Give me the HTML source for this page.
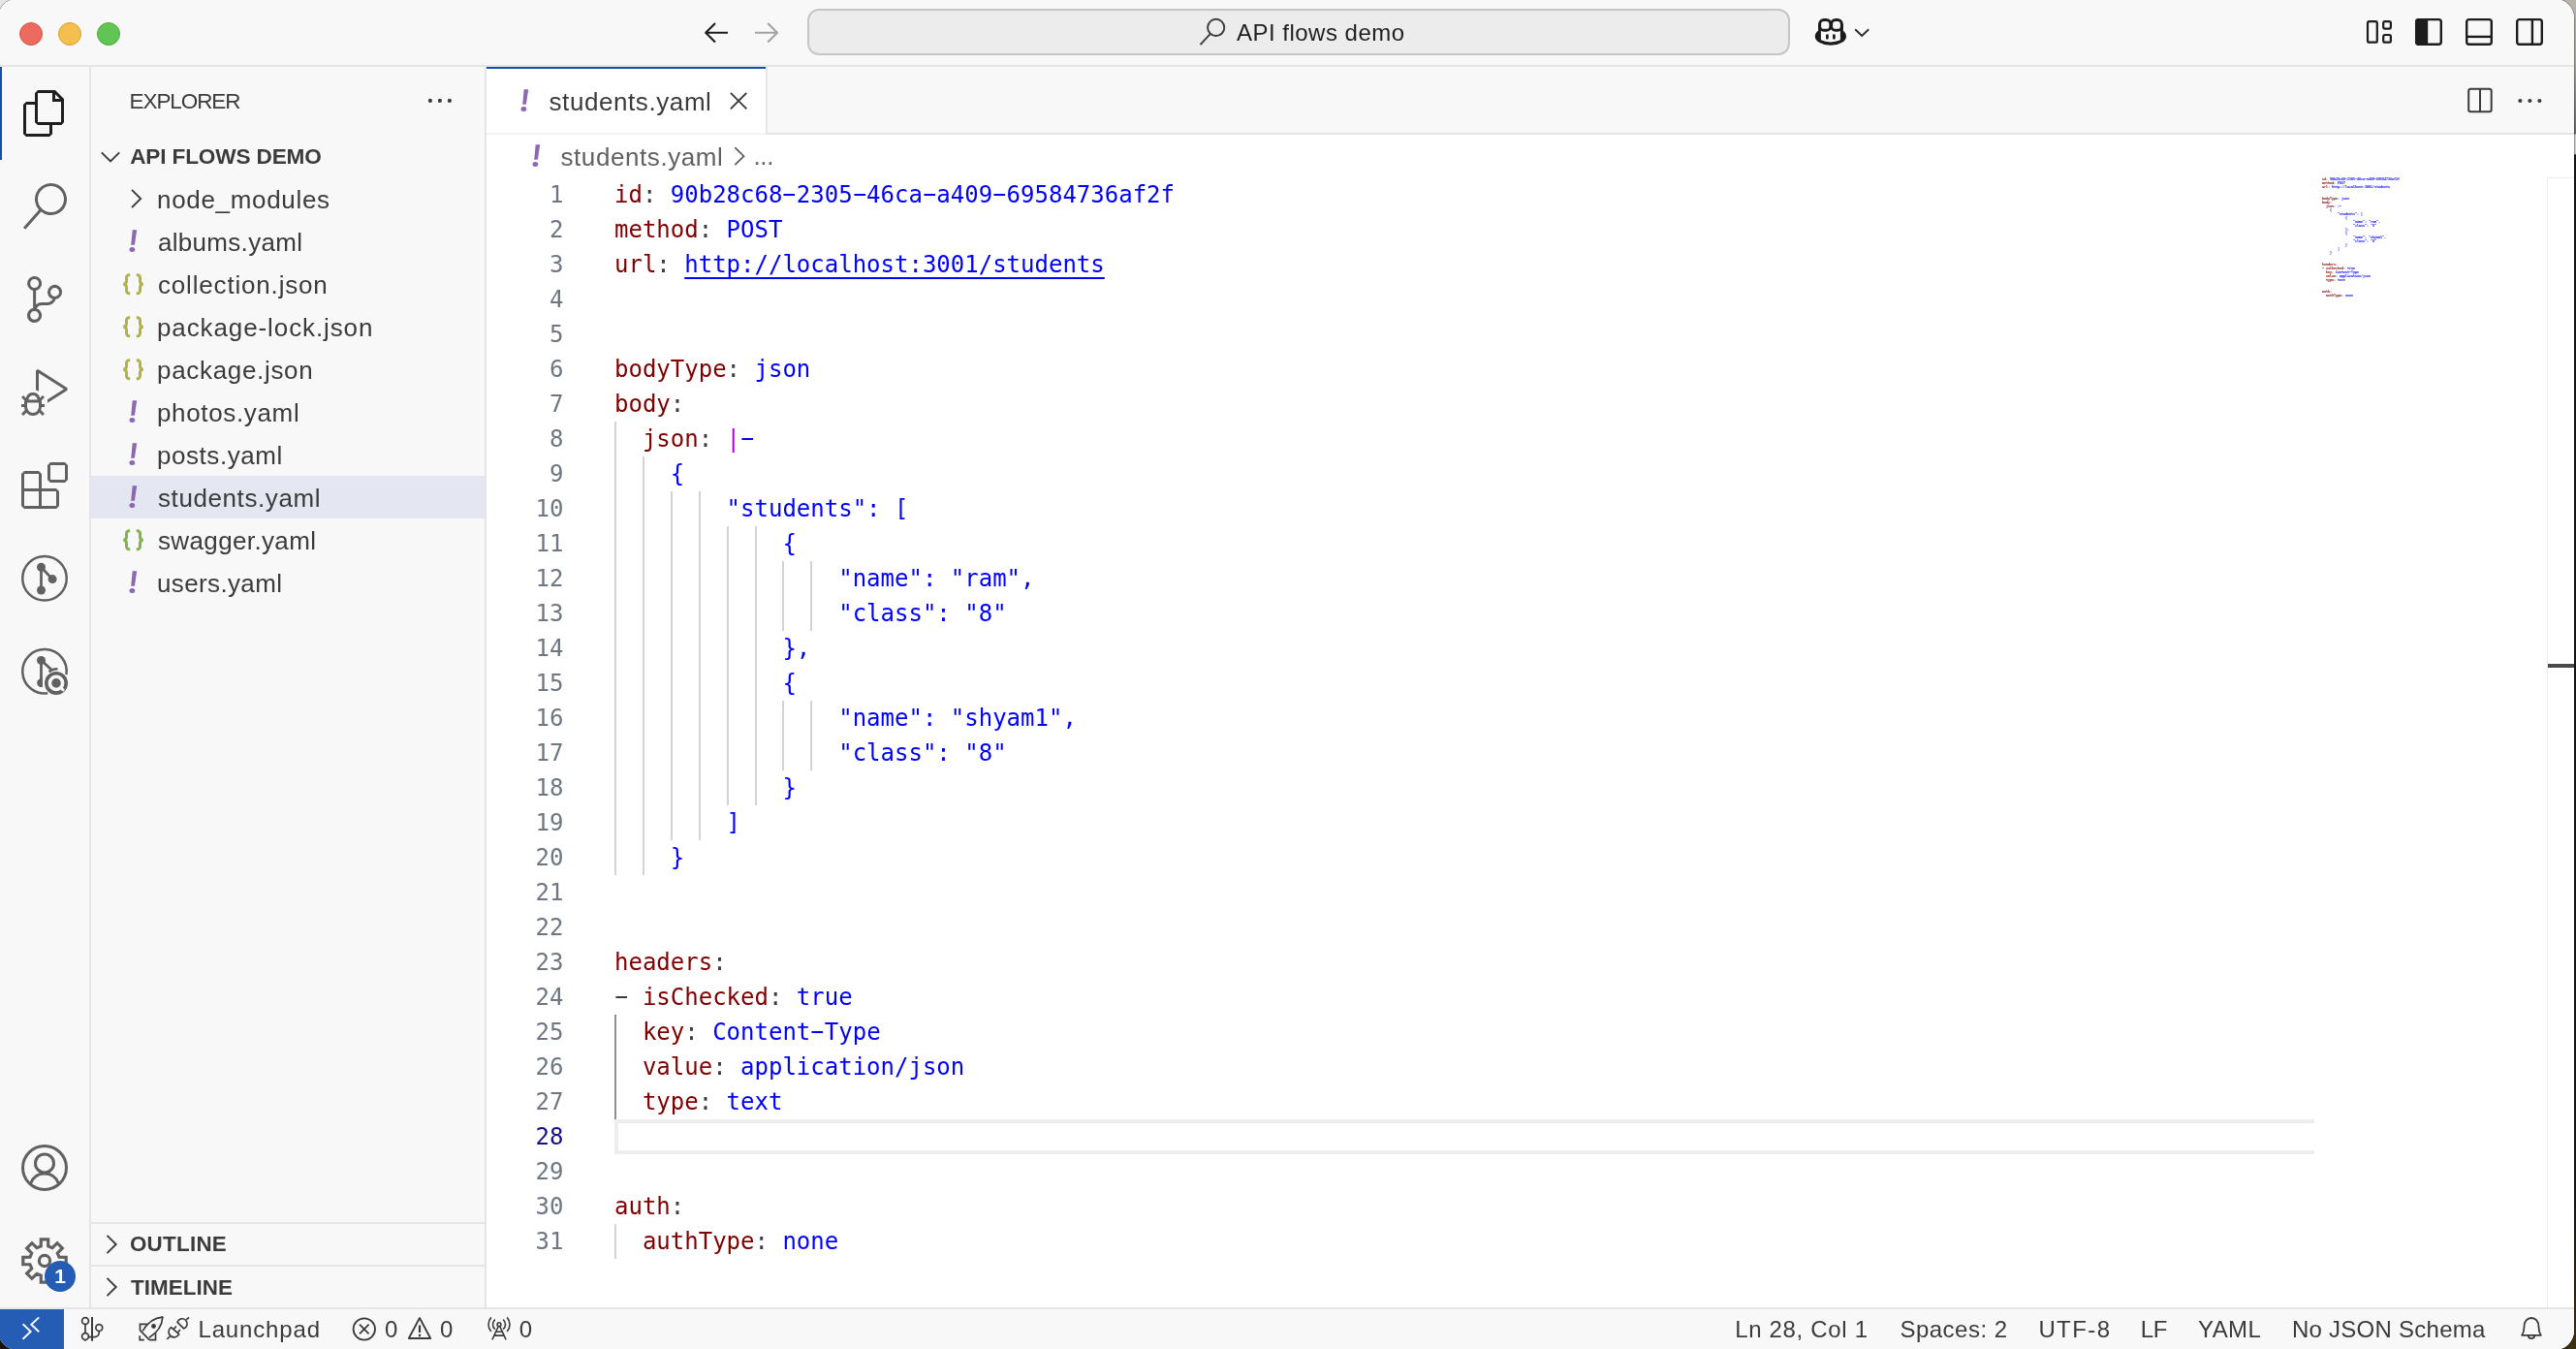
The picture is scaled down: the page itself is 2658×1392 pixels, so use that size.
<!DOCTYPE html>
<html lang="en">
<head>
<meta charset="utf-8">
<title>students.yaml — API flows demo</title>
<style>
*{box-sizing:border-box;margin:0;padding:0}
html,body{width:2658px;height:1392px;background:#16151b}
body{font-family:"Liberation Sans",sans-serif}
#root{position:relative;width:2658px;height:1392px;overflow:hidden;background:#16151b}
#bgtop{position:absolute;left:2600px;top:0;width:58px;height:160px;background:linear-gradient(#bab4ac 0,#aaa39b 40%,#6a6562 86%,#d0d0d0 87%,#d0d0d0 99%,#16161e 100%)}#bgbot{position:absolute;left:2600px;top:1240px;width:58px;height:152px;background:linear-gradient(#16161e,#2a220f 40%,#3b3013)}
#bgtl{position:absolute;left:0;top:0;width:30px;height:30px;background:#e6e6e6}#bgbl{position:absolute;left:0;top:1360px;width:30px;height:32px;background:#1e1208}
#win{position:absolute;left:-2px;top:-1px;width:2658px;height:1394px;background:#f8f8f8;border-radius:20px;overflow:hidden;box-shadow:0 0 0 1px rgba(0,0,0,.28)}
#win>div,#win>svg,#win>span,#win>i{position:absolute}
/* everything inside #win is laid out in screenshot coords via this wrapper */
#w{position:absolute;left:2px;top:1px;width:2656px;height:1392px;will-change:transform}
#w>*{position:absolute}
.t{position:absolute;white-space:pre;display:block}
.hl{background:#e5e5e5}
#titlebar{left:0;top:0;width:2656px;height:67px;background:#f8f8f8}
#cc{left:833px;top:9px;width:1014px;height:48px;border:2px solid #c6c6c6;border-radius:12px;background:#ececec}
.tl{width:24px;height:24px;border-radius:50%;top:23px}
#editor{left:502px;top:139px;width:2154px;height:1210px;background:#fff}
#tabbar{left:502px;top:69px;width:2154px;height:68px;background:#f8f8f8}
#tab{left:502px;top:69px;width:288px;height:70px;background:#fff;border-top:2px solid #1550a8}
#sel{left:94px;top:491px;width:406px;height:44px;background:#e4e6f1}
#status{left:0;top:1351px;width:2656px;height:41px;background:#f8f8f8}
#remote{left:0;top:1351px;width:66px;height:41px;background:#255db4}
/* code */
.ln{position:absolute;left:502px;width:79.5px;text-align:right;font:24px/36px "DejaVu Sans Mono","Liberation Mono",monospace;color:#6e7681;height:36px}
.ln.act{color:#171184}
.cl{position:absolute;left:634px;font:24px/36px "DejaVu Sans Mono","Liberation Mono",monospace;white-space:pre;height:36px;color:#3b3b3b}
.k{color:#800000}.v{color:#0000ff}.p{color:#3b3b3b}.m{color:#af00db}.h{display:inline-block;transform:translateY(-1px) scaleX(1.9)}
.u{color:#0000ff;text-decoration:underline;text-decoration-thickness:2px;text-underline-offset:5px}
.g{position:absolute;width:2px;height:36px;background:#d3d3d3}
.g.ga{background:#8e8e8e}
#curline{left:634px;top:1155px;width:1754px;height:36px;border:4px solid #eeeeee;border-right:none}
#mini{left:2395.5px;top:183px;width:0;height:0}
#mini .mi{position:absolute;left:0;top:0;transform-origin:0 0;transform:scale(0.1384,0.1384);width:1800px}
.ml{position:absolute;left:0;font:24px/29px "DejaVu Sans Mono","Liberation Mono",monospace;white-space:pre;height:29px;font-weight:bold}
#mini .u{text-decoration:none}
</style>
</head>
<body>
<div id="root">
<div id="bgtop"></div>
<div id="bgbot"></div>
<div id="bgtl"></div>
<div id="bgbl"></div>
<div id="win"><div id="w">

<!-- ===== title bar ===== -->
<div id="titlebar"></div>
<div class="hl" style="left:0;top:67px;width:2656px;height:2px"></div>
<div class="tl" style="left:20px;background:#ed6a5e;border:1px solid #d5574b"></div>
<div class="tl" style="left:60px;background:#f5bf4f;border:1px solid #d9a13a"></div>
<div class="tl" style="left:100px;background:#61c554;border:1px solid #4ea73f"></div>
<svg style="left:722px;top:18px" width="32" height="32" viewBox="0 0 32 32" fill="none" stroke="#1c1c1c" stroke-width="2.100" stroke-linecap="butt" stroke-linejoin="round"><path d="M29 15.800H6.500M16 6L6.200 15.800l9.800 9.800"/></svg>
<svg style="left:776px;top:18px" width="32" height="32" viewBox="0 0 32 32" fill="none" stroke="#a3a3a3" stroke-width="2.100" stroke-linejoin="round"><path d="M3 15.800h22.500M16.200 6l9.800 9.800-9.800 9.800"/></svg>
<div id="cc"></div>
<svg style="left:1237px;top:17px" width="30" height="32" viewBox="0 0 30 32" fill="none" stroke="#3b3b3b" stroke-width="1.900"><circle cx="17.700" cy="11.400" r="8.600"/><path d="M11.900 17.800L1.500 29.200"/></svg>
<!-- copilot -->
<svg style="left:1868px;top:14px" width="42" height="36" viewBox="0 0 42 36"><ellipse cx="20.900" cy="23.400" rx="16.100" ry="9.400" fill="#1c1c1c"/><rect x="8.100" y="11" width="25.800" height="15" fill="#1c1c1c"/><path d="M10.900 15.500H30.900V27.300A14 7 0 0 1 10.900 27.300Z" fill="#f8f8f8"/><g fill="#f8f8f8" stroke="#1c1c1c" stroke-width="3"><rect x="9.600" y="6.400" width="11.300" height="10.900" rx="4.400"/><rect x="21.600" y="6.400" width="10.800" height="10.900" rx="4.400"/></g><path d="M17.400 22.700v2.600M24.400 22.700v2.600" stroke="#1c1c1c" stroke-width="2.800" stroke-linecap="round"/></svg>
<svg style="left:1912px;top:26px" width="18" height="14" viewBox="0 0 18 14" fill="none" stroke="#2b2b2b" stroke-width="1.900"><path d="M2.200 4.300l7 6.700 7-6.700"/></svg>
<!-- layout icons -->
<svg style="left:2441px;top:20px" width="30" height="28" viewBox="0 0 30 28" fill="none" stroke="#1c1c1c" stroke-width="2.200"><rect x="2" y="2.100" width="9.800" height="21.600" rx="1.800"/><rect x="18.200" y="2.100" width="7.700" height="7.500" rx="1.800"/><rect x="18.200" y="16" width="7.700" height="7.700" rx="1.800"/></svg>
<svg style="left:2491px;top:18px" width="30" height="32" viewBox="0 0 30 32" fill="none" stroke="#1c1c1c" stroke-width="2.400"><rect x="2.200" y="2.100" width="25.600" height="25.600" rx="2.400"/><path d="M2.200 4.500a2.400 2.400 0 0 1 2.400-2.400h8.400v25.600h-8.400a2.400 2.400 0 0 1-2.400-2.400z" fill="#1c1c1c"/></svg>
<svg style="left:2543px;top:18px" width="30" height="32" viewBox="0 0 30 32" fill="none" stroke="#1c1c1c" stroke-width="2.400"><rect x="2.200" y="2.100" width="25.600" height="25.600" rx="2.400"/><path d="M2.200 19.900h25.600"/></svg>
<svg style="left:2595px;top:18px" width="30" height="32" viewBox="0 0 30 32" fill="none" stroke="#1c1c1c" stroke-width="2.400"><rect x="2.200" y="2.100" width="25.600" height="25.600" rx="2.400"/><path d="M17.900 2.100v25.600"/></svg>

<!-- ===== activity bar ===== -->
<div class="hl" style="left:92px;top:69px;width:2px;height:1280px"></div>
<div style="left:0;top:69px;width:2px;height:96px;background:#1550a8"></div>
<svg style="left:22px;top:93px" width="48" height="48" viewBox="0 0 24 24" fill="#1f1f1f"><path d="M17.500 0h-9L7 1.500V6H2.500L1 7.500v15.070L2.500 24h12.070L16 22.570V18h4.700l1.300-1.430V4.500L17.500 0zm0 2.120l2.380 2.380H17.500V2.120zm-3 20.380h-12v-15H7v9.070L8.500 18h6v4.500zm6-6h-12v-15H16V6h4.500v10.500z"/></svg>
<svg style="left:22px;top:189px" width="48" height="48" viewBox="0 0 24 24" fill="#616161"><path d="M15.250 0a8.250 8.250 0 0 0-6.180 13.720L1 22.880l1.120 1 8.050-9.120A8.251 8.251 0 1 0 15.250.010V0zm0 15a6.750 6.750 0 1 1 0-13.500 6.750 6.750 0 0 1 0 13.500z"/></svg>
<svg style="left:22px;top:285px" width="48" height="48" viewBox="0 0 24 24" fill="#616161"><path d="M21.007 8.222A3.738 3.738 0 0 0 15.045 5.200a3.737 3.737 0 0 0 1.156 6.583 2.988 2.988 0 0 1-2.668 1.670h-2.990a4.456 4.456 0 0 0-2.989 1.165V7.400a3.737 3.737 0 1 0-1.494 0v9.117a3.776 3.776 0 1 0 1.816.099 2.990 2.990 0 0 1 2.668-1.667h2.990a4.484 4.484 0 0 0 4.223-3.039 3.736 3.736 0 0 0 3.250-3.687zM4.565 3.738a2.242 2.242 0 1 1 4.484 0 2.242 2.242 0 0 1-4.484 0zm4.484 16.441a2.242 2.242 0 1 1-4.484 0 2.242 2.242 0 0 1 4.484 0zm8.221-9.715a2.242 2.242 0 1 1 0-4.485 2.242 2.242 0 0 1 0 4.485z"/></svg>
<svg style="left:22px;top:381px" width="48" height="48" viewBox="0 0 24 24" fill="#616161"><path d="M10.940 13.500l-1.320 1.320a3.730 3.730 0 0 0-7.240 0L1.060 13.500 0 14.560l1.720 1.720-.22.220V18H0v1.500h1.500v.080c.077.489.214.966.410 1.420L0 22.940 1.060 24l1.650-1.650A4.308 4.308 0 0 0 6 24a4.310 4.310 0 0 0 3.290-1.650L10.940 24 12 22.940 10.090 21c.198-.464.336-.951.410-1.450v-.1H12V18h-1.500v-1.500l-.22-.220L12 14.560l-1.060-1.060zM6 13.500a2.250 2.250 0 0 1 2.250 2.250h-4.500A2.250 2.250 0 0 1 6 13.500zm3 6a3.330 3.330 0 0 1-3 3 3.330 3.330 0 0 1-3-3v-2.250h6v2.250zm14.760-9.900v1.260L13.500 17.370V15.600l8.500-5.370L9 2v9.460a5.070 5.070 0 0 0-1.500-.72V.630L8.640 0l15.120 9.600z"/></svg>
<svg style="left:22px;top:477px" width="48" height="48" viewBox="0 0 24 24" fill="#616161"><path fill-rule="evenodd" clip-rule="evenodd" d="M13.500 1.500L15 0h7.500L24 1.500V9l-1.500 1.500H15L13.500 9V1.500zm1.500 0V9h7.500V1.500H15zM0 15V6l1.500-1.500H9L10.500 6v7.500H18l1.500 1.500v7.500L18 24H1.500L0 22.500V15zm9-1.500V6H1.500v7.500H9zM9 15H1.500v7.500H9V15zm1.500 7.500H18V15h-7.500v7.500z"/></svg>
<!-- gitlens -->
<svg style="left:20px;top:571px" width="52" height="52" viewBox="0 0 52 52" fill="none" stroke="#616161" stroke-width="2.500"><circle cx="26" cy="25.800" r="22.750"/><path d="M22.500 14.200v23.800M22.500 14.200l11.600 12.400" stroke-width="2.800"/><g fill="#616161" stroke="none"><circle cx="22.500" cy="14.200" r="4.500"/><circle cx="34.100" cy="26.600" r="4.500"/><circle cx="22.500" cy="38" r="4.500"/></g></svg>
<svg style="left:20px;top:667px" width="52" height="52" viewBox="0 0 52 52" fill="none" stroke="#616161" stroke-width="2.500"><path d="M29.240 48.320A22.750 22.750 0 1 1 48.500 29.160"/><path d="M22.500 14.200v23.800M22.500 14.200l10.500 9.800" stroke-width="2.800"/><path d="M30.500 26.300c2.600-2.300 5.600-3.200 9-3" stroke-width="2.600"/><g fill="#616161" stroke="none"><circle cx="22.500" cy="14.400" r="4.500"/><path d="M24 33.300a4.500 4.500 0 1 0 0 8.600z"/><circle cx="38" cy="37.900" r="12"/></g><circle cx="38" cy="37.900" r="6.600" stroke="#f8f8f8" stroke-width="3.600"/><path d="M43.400 43.300l1.700 1.500" stroke="#f8f8f8" stroke-width="3" stroke-linecap="round"/></svg>
<!-- account -->
<svg style="left:20px;top:1179px" width="52" height="52" viewBox="0 0 52 52" fill="none" stroke="#616161" stroke-width="3"><circle cx="26" cy="26" r="22.500"/><circle cx="26" cy="21.400" r="9.500"/><path d="M11.500 42.500c2.500-7 8-10.500 14.500-10.500s12 3.500 14.500 10.500"/></svg>
<!-- gear -->
<svg style="left:22px;top:1277px" width="48" height="48" viewBox="0 0 48 48" fill="none" stroke="#616161" stroke-width="3.200" stroke-linejoin="miter"><path d="M20.26 8.96 L20.31 1.81 L27.69 1.81 L27.74 8.96 L31.99 10.72 L37.08 5.69 L42.31 10.92 L37.28 16.01 L39.04 20.26 L46.19 20.31 L46.19 27.69 L39.04 27.74 L37.28 31.99 L42.31 37.08 L37.08 42.31 L31.99 37.28 L27.74 39.04 L27.69 46.19 L20.31 46.19 L20.26 39.04 L16.01 37.28 L10.92 42.31 L5.69 37.08 L10.72 31.99 L8.96 27.74 L1.81 27.69 L1.81 20.31 L8.96 20.26 L10.72 16.01 L5.69 10.92 L10.92 5.69 L16.01 10.72Z"/><circle cx="24" cy="24" r="5.600"/></svg>
<div style="left:46px;top:1301px;width:32px;height:32px;border-radius:50%;background:#255db4"></div>
<span class="t" style="left:46px;top:1301px;width:32px;text-align:center;font:bold 21px/32px 'Liberation Sans',sans-serif;color:#fff">1</span>

<!-- ===== sidebar ===== -->
<div class="hl" style="left:500px;top:69px;width:2px;height:1280px"></div>
<div id="sel"></div>
<svg style="left:440px;top:100px" width="28" height="8" viewBox="0 0 28 8" fill="#3b3b3b"><circle cx="3.900" cy="3.900" r="2.100"/><circle cx="13.900" cy="3.900" r="2.100"/><circle cx="23.900" cy="3.900" r="2.100"/></svg>
<svg style="left:102px;top:154px" width="24" height="16" viewBox="0 0 24 16" fill="none" stroke="#3b3b3b" stroke-width="1.900"><path d="M2.800 3.300l9.200 9.200 9.200-9.200"/></svg>
<svg style="left:132px;top:194px" width="16" height="22" viewBox="0 0 16 22" fill="none" stroke="#3b3b3b" stroke-width="1.900"><path d="M4 1.800l9.200 9.200L4 20.200"/></svg>
<div class="hl" style="left:94px;top:1261px;width:406px;height:2px"></div>
<div class="hl" style="left:94px;top:1305px;width:406px;height:2px"></div>
<svg style="left:107px;top:1273px" width="16" height="22" viewBox="0 0 16 22" fill="none" stroke="#3b3b3b" stroke-width="1.900"><path d="M3.500 1.800l9.200 9.200-9.200 9.200"/></svg>
<svg style="left:107px;top:1317px" width="16" height="22" viewBox="0 0 16 22" fill="none" stroke="#3b3b3b" stroke-width="1.900"><path d="M3.500 1.800l9.200 9.200-9.200 9.200"/></svg>
<!-- file icons -->
<svg style="left:122px;top:278.5px" width="32" height="30" viewBox="0 0 32 30" fill="none" stroke="#b1b343" stroke-width="3"><path d="M12.200 4.800h-1a2.700 2.700 0 0 0-2.700 2.700v3.500Q8.500 14.300 5.200 14.300Q8.500 14.300 8.500 17.600v3.500a2.700 2.700 0 0 0 2.700 2.700h1M18.800 4.800h1a2.700 2.700 0 0 1 2.700 2.700v3.500Q22.500 14.300 25.800 14.300Q22.500 14.300 22.500 17.600v3.500a2.700 2.700 0 0 1-2.700 2.700h-1"/></svg>
<svg style="left:122px;top:322.5px" width="32" height="30" viewBox="0 0 32 30" fill="none" stroke="#b1b343" stroke-width="3"><path d="M12.200 4.800h-1a2.700 2.700 0 0 0-2.700 2.700v3.500Q8.500 14.300 5.200 14.300Q8.500 14.300 8.500 17.600v3.500a2.700 2.700 0 0 0 2.700 2.700h1M18.800 4.800h1a2.700 2.700 0 0 1 2.700 2.700v3.500Q22.500 14.300 25.800 14.300Q22.500 14.300 22.500 17.600v3.500a2.700 2.700 0 0 1-2.700 2.700h-1"/></svg>
<svg style="left:122px;top:366.5px" width="32" height="30" viewBox="0 0 32 30" fill="none" stroke="#b1b343" stroke-width="3"><path d="M12.200 4.800h-1a2.700 2.700 0 0 0-2.700 2.700v3.500Q8.500 14.300 5.200 14.300Q8.500 14.300 8.500 17.600v3.500a2.700 2.700 0 0 0 2.700 2.700h1M18.800 4.800h1a2.700 2.700 0 0 1 2.700 2.700v3.500Q22.500 14.300 25.800 14.300Q22.500 14.300 22.500 17.600v3.500a2.700 2.700 0 0 1-2.700 2.700h-1"/></svg>
<svg style="left:122px;top:542.5px" width="32" height="30" viewBox="0 0 32 30" fill="none" stroke="#82b446" stroke-width="3"><path d="M12.200 4.800h-1a2.700 2.700 0 0 0-2.700 2.700v3.500Q8.500 14.300 5.200 14.300Q8.500 14.300 8.500 17.600v3.500a2.700 2.700 0 0 0 2.700 2.700h1M18.800 4.800h1a2.700 2.700 0 0 1 2.700 2.700v3.500Q22.500 14.300 25.800 14.300Q22.500 14.300 22.500 17.600v3.500a2.700 2.700 0 0 1-2.700 2.700h-1"/></svg>
<svg style="left:127px;top:233px" width="20" height="30" viewBox="0 0 20 30" fill="#8b68b0"><path d="M9.700 4.200h4.500L11.900 19.700H8.200z"/><ellipse cx="9.350" cy="24.600" rx="2.900" ry="2.500"/></svg>
<svg style="left:127px;top:409px" width="20" height="30" viewBox="0 0 20 30" fill="#8b68b0"><path d="M9.700 4.200h4.500L11.900 19.700H8.200z"/><ellipse cx="9.350" cy="24.600" rx="2.900" ry="2.500"/></svg>
<svg style="left:127px;top:453px" width="20" height="30" viewBox="0 0 20 30" fill="#8b68b0"><path d="M9.700 4.200h4.500L11.900 19.700H8.200z"/><ellipse cx="9.350" cy="24.600" rx="2.900" ry="2.500"/></svg>
<svg style="left:127px;top:497px" width="20" height="30" viewBox="0 0 20 30" fill="#8b68b0"><path d="M9.700 4.200h4.500L11.900 19.700H8.200z"/><ellipse cx="9.350" cy="24.600" rx="2.900" ry="2.500"/></svg>
<svg style="left:127px;top:585px" width="20" height="30" viewBox="0 0 20 30" fill="#8b68b0"><path d="M9.700 4.200h4.500L11.900 19.700H8.200z"/><ellipse cx="9.350" cy="24.600" rx="2.900" ry="2.500"/></svg>

<!-- ===== editor ===== -->
<div id="tabbar"></div>
<div class="hl" style="left:502px;top:137px;width:2154px;height:2px"></div>
<div id="tab"></div>
<div style="left:502px;top:137px;width:288px;height:2px;background:#f3f3f3"></div>
<div class="hl" style="left:790px;top:69px;width:2px;height:68px"></div>
<svg style="left:750px;top:92px" width="24" height="24" viewBox="0 0 24 24" fill="none" stroke="#3b3b3b" stroke-width="1.900"><path d="M3.900 3.900l16.400 16.400M20.300 3.900l-16.400 16.400"/></svg>
<svg style="left:2544px;top:88.500px" width="30" height="30" viewBox="0 0 30 30" fill="none" stroke="#3b3b3b" stroke-width="2"><rect x="3.200" y="2.800" width="23.500" height="23.400" rx="2.200"/><path d="M15 2.800v23.400"/></svg>
<svg style="left:2596.500px;top:100px" width="28" height="8" viewBox="0 0 28 8" fill="#3b3b3b"><circle cx="3.400" cy="4" r="2.100"/><circle cx="13.400" cy="4" r="2.100"/><circle cx="23.400" cy="4" r="2.100"/></svg>
<div id="editor"></div>
<svg style="left:754px;top:150px" width="16" height="22" viewBox="0 0 16 22" fill="none" stroke="#616161" stroke-width="1.800"><path d="M4.300 2.200L13.500 11.200L4.300 20.200"/></svg>
<svg style="left:530.7px;top:87.9px" width="20" height="30" viewBox="0 0 20 30" fill="#8b68b0"><path d="M9.700 4.200h4.500L11.900 19.700H8.200z"/><ellipse cx="9.350" cy="24.600" rx="2.900" ry="2.500"/></svg>
<svg style="left:542.8px;top:144.9px" width="20" height="30" viewBox="0 0 20 30" fill="#8b68b0"><path d="M9.700 4.200h4.500L11.900 19.700H8.200z"/><ellipse cx="9.350" cy="24.600" rx="2.900" ry="2.500"/></svg>
<div id="curline"></div>
<i class="g" style="left:634.0px;top:435px"></i>
<i class="g" style="left:634.0px;top:471px"></i>
<i class="g" style="left:662.9px;top:471px"></i>
<i class="g" style="left:634.0px;top:507px"></i>
<i class="g" style="left:662.9px;top:507px"></i>
<i class="g" style="left:691.8px;top:507px"></i>
<i class="g" style="left:720.7px;top:507px"></i>
<i class="g" style="left:634.0px;top:543px"></i>
<i class="g" style="left:662.9px;top:543px"></i>
<i class="g" style="left:691.8px;top:543px"></i>
<i class="g" style="left:720.7px;top:543px"></i>
<i class="g" style="left:749.6px;top:543px"></i>
<i class="g" style="left:778.5px;top:543px"></i>
<i class="g" style="left:634.0px;top:579px"></i>
<i class="g" style="left:662.9px;top:579px"></i>
<i class="g" style="left:691.8px;top:579px"></i>
<i class="g" style="left:720.7px;top:579px"></i>
<i class="g" style="left:749.6px;top:579px"></i>
<i class="g" style="left:778.5px;top:579px"></i>
<i class="g" style="left:807.4px;top:579px"></i>
<i class="g" style="left:836.3px;top:579px"></i>
<i class="g" style="left:634.0px;top:615px"></i>
<i class="g" style="left:662.9px;top:615px"></i>
<i class="g" style="left:691.8px;top:615px"></i>
<i class="g" style="left:720.7px;top:615px"></i>
<i class="g" style="left:749.6px;top:615px"></i>
<i class="g" style="left:778.5px;top:615px"></i>
<i class="g" style="left:807.4px;top:615px"></i>
<i class="g" style="left:836.3px;top:615px"></i>
<i class="g" style="left:634.0px;top:651px"></i>
<i class="g" style="left:662.9px;top:651px"></i>
<i class="g" style="left:691.8px;top:651px"></i>
<i class="g" style="left:720.7px;top:651px"></i>
<i class="g" style="left:749.6px;top:651px"></i>
<i class="g" style="left:778.5px;top:651px"></i>
<i class="g" style="left:634.0px;top:687px"></i>
<i class="g" style="left:662.9px;top:687px"></i>
<i class="g" style="left:691.8px;top:687px"></i>
<i class="g" style="left:720.7px;top:687px"></i>
<i class="g" style="left:749.6px;top:687px"></i>
<i class="g" style="left:778.5px;top:687px"></i>
<i class="g" style="left:634.0px;top:723px"></i>
<i class="g" style="left:662.9px;top:723px"></i>
<i class="g" style="left:691.8px;top:723px"></i>
<i class="g" style="left:720.7px;top:723px"></i>
<i class="g" style="left:749.6px;top:723px"></i>
<i class="g" style="left:778.5px;top:723px"></i>
<i class="g" style="left:807.4px;top:723px"></i>
<i class="g" style="left:836.3px;top:723px"></i>
<i class="g" style="left:634.0px;top:759px"></i>
<i class="g" style="left:662.9px;top:759px"></i>
<i class="g" style="left:691.8px;top:759px"></i>
<i class="g" style="left:720.7px;top:759px"></i>
<i class="g" style="left:749.6px;top:759px"></i>
<i class="g" style="left:778.5px;top:759px"></i>
<i class="g" style="left:807.4px;top:759px"></i>
<i class="g" style="left:836.3px;top:759px"></i>
<i class="g" style="left:634.0px;top:795px"></i>
<i class="g" style="left:662.9px;top:795px"></i>
<i class="g" style="left:691.8px;top:795px"></i>
<i class="g" style="left:720.7px;top:795px"></i>
<i class="g" style="left:749.6px;top:795px"></i>
<i class="g" style="left:778.5px;top:795px"></i>
<i class="g" style="left:634.0px;top:831px"></i>
<i class="g" style="left:662.9px;top:831px"></i>
<i class="g" style="left:691.8px;top:831px"></i>
<i class="g" style="left:720.7px;top:831px"></i>
<i class="g" style="left:634.0px;top:867px"></i>
<i class="g" style="left:662.9px;top:867px"></i>
<i class="g ga" style="left:634.0px;top:1047px"></i>
<i class="g ga" style="left:634.0px;top:1083px"></i>
<i class="g ga" style="left:634.0px;top:1119px"></i>
<i class="g" style="left:634.0px;top:1263px"></i>
<div class="ln" style="top:183px">1</div>
<div class="ln" style="top:219px">2</div>
<div class="ln" style="top:255px">3</div>
<div class="ln" style="top:291px">4</div>
<div class="ln" style="top:327px">5</div>
<div class="ln" style="top:363px">6</div>
<div class="ln" style="top:399px">7</div>
<div class="ln" style="top:435px">8</div>
<div class="ln" style="top:471px">9</div>
<div class="ln" style="top:507px">10</div>
<div class="ln" style="top:543px">11</div>
<div class="ln" style="top:579px">12</div>
<div class="ln" style="top:615px">13</div>
<div class="ln" style="top:651px">14</div>
<div class="ln" style="top:687px">15</div>
<div class="ln" style="top:723px">16</div>
<div class="ln" style="top:759px">17</div>
<div class="ln" style="top:795px">18</div>
<div class="ln" style="top:831px">19</div>
<div class="ln" style="top:867px">20</div>
<div class="ln" style="top:903px">21</div>
<div class="ln" style="top:939px">22</div>
<div class="ln" style="top:975px">23</div>
<div class="ln" style="top:1011px">24</div>
<div class="ln" style="top:1047px">25</div>
<div class="ln" style="top:1083px">26</div>
<div class="ln" style="top:1119px">27</div>
<div class="ln act" style="top:1155px">28</div>
<div class="ln" style="top:1191px">29</div>
<div class="ln" style="top:1227px">30</div>
<div class="ln" style="top:1263px">31</div>
<div class="cl" style="top:183px"><span class="k">id</span><span class="p">: </span><span class="v">90b28c68<span class="h">-</span>2305<span class="h">-</span>46ca<span class="h">-</span>a409<span class="h">-</span>69584736af2f</span></div>
<div class="cl" style="top:219px"><span class="k">method</span><span class="p">: </span><span class="v">POST</span></div>
<div class="cl" style="top:255px"><span class="k">url</span><span class="p">: </span><span class="u">http://localhost:3001/students</span></div>
<div class="cl" style="top:363px"><span class="k">bodyType</span><span class="p">: </span><span class="v">json</span></div>
<div class="cl" style="top:399px"><span class="k">body</span><span class="p">:</span></div>
<div class="cl" style="top:435px"><span class="p">  </span><span class="k">json</span><span class="p">: </span><span class="m">|</span><span class="v"><span class="h">-</span></span></div>
<div class="cl" style="top:471px"><span class="v">    {</span></div>
<div class="cl" style="top:507px"><span class="v">        &quot;students&quot;: [</span></div>
<div class="cl" style="top:543px"><span class="v">            {</span></div>
<div class="cl" style="top:579px"><span class="v">                &quot;name&quot;: &quot;ram&quot;,</span></div>
<div class="cl" style="top:615px"><span class="v">                &quot;class&quot;: &quot;8&quot;</span></div>
<div class="cl" style="top:651px"><span class="v">            },</span></div>
<div class="cl" style="top:687px"><span class="v">            {</span></div>
<div class="cl" style="top:723px"><span class="v">                &quot;name&quot;: &quot;shyam1&quot;,</span></div>
<div class="cl" style="top:759px"><span class="v">                &quot;class&quot;: &quot;8&quot;</span></div>
<div class="cl" style="top:795px"><span class="v">            }</span></div>
<div class="cl" style="top:831px"><span class="v">        ]</span></div>
<div class="cl" style="top:867px"><span class="v">    }</span></div>
<div class="cl" style="top:975px"><span class="k">headers</span><span class="p">:</span></div>
<div class="cl" style="top:1011px"><span class="p"><span class="h">-</span> </span><span class="k">isChecked</span><span class="p">: </span><span class="v">true</span></div>
<div class="cl" style="top:1047px"><span class="p">  </span><span class="k">key</span><span class="p">: </span><span class="v">Content<span class="h">-</span>Type</span></div>
<div class="cl" style="top:1083px"><span class="p">  </span><span class="k">value</span><span class="p">: </span><span class="v">application/json</span></div>
<div class="cl" style="top:1119px"><span class="p">  </span><span class="k">type</span><span class="p">: </span><span class="v">text</span></div>
<div class="cl" style="top:1227px"><span class="k">auth</span><span class="p">:</span></div>
<div class="cl" style="top:1263px"><span class="p">  </span><span class="k">authType</span><span class="p">: </span><span class="v">none</span></div>
<div id="mini"><div class="mi">
<div class="ml" style="top:0.0px"><span class="k">id</span><span class="p">: </span><span class="v">90b28c68<span class="h">-</span>2305<span class="h">-</span>46ca<span class="h">-</span>a409<span class="h">-</span>69584736af2f</span></div>
<div class="ml" style="top:28.9px"><span class="k">method</span><span class="p">: </span><span class="v">POST</span></div>
<div class="ml" style="top:57.8px"><span class="k">url</span><span class="p">: </span><span class="u">http://localhost:3001/students</span></div>
<div class="ml" style="top:144.5px"><span class="k">bodyType</span><span class="p">: </span><span class="v">json</span></div>
<div class="ml" style="top:173.4px"><span class="k">body</span><span class="p">:</span></div>
<div class="ml" style="top:202.3px"><span class="p">  </span><span class="k">json</span><span class="p">: </span><span class="m">|</span><span class="v"><span class="h">-</span></span></div>
<div class="ml" style="top:231.2px"><span class="v">    {</span></div>
<div class="ml" style="top:260.1px"><span class="v">        &quot;students&quot;: [</span></div>
<div class="ml" style="top:289.0px"><span class="v">            {</span></div>
<div class="ml" style="top:317.9px"><span class="v">                &quot;name&quot;: &quot;ram&quot;,</span></div>
<div class="ml" style="top:346.8px"><span class="v">                &quot;class&quot;: &quot;8&quot;</span></div>
<div class="ml" style="top:375.7px"><span class="v">            },</span></div>
<div class="ml" style="top:404.6px"><span class="v">            {</span></div>
<div class="ml" style="top:433.5px"><span class="v">                &quot;name&quot;: &quot;shyam1&quot;,</span></div>
<div class="ml" style="top:462.4px"><span class="v">                &quot;class&quot;: &quot;8&quot;</span></div>
<div class="ml" style="top:491.3px"><span class="v">            }</span></div>
<div class="ml" style="top:520.2px"><span class="v">        ]</span></div>
<div class="ml" style="top:549.1px"><span class="v">    }</span></div>
<div class="ml" style="top:635.8px"><span class="k">headers</span><span class="p">:</span></div>
<div class="ml" style="top:664.7px"><span class="p"><span class="h">-</span> </span><span class="k">isChecked</span><span class="p">: </span><span class="v">true</span></div>
<div class="ml" style="top:693.6px"><span class="p">  </span><span class="k">key</span><span class="p">: </span><span class="v">Content<span class="h">-</span>Type</span></div>
<div class="ml" style="top:722.5px"><span class="p">  </span><span class="k">value</span><span class="p">: </span><span class="v">application/json</span></div>
<div class="ml" style="top:751.4px"><span class="p">  </span><span class="k">type</span><span class="p">: </span><span class="v">text</span></div>
<div class="ml" style="top:838.1px"><span class="k">auth</span><span class="p">:</span></div>
<div class="ml" style="top:867.0px"><span class="p">  </span><span class="k">authType</span><span class="p">: </span><span class="v">none</span></div>
</div></div>
<!-- scrollbar -->
<div style="left:2628px;top:183px;width:1px;height:1166px;background:#ececec"></div>
<div style="left:2628px;top:183px;width:28px;height:1px;background:#ececec"></div>
<div style="left:2629px;top:685px;width:27px;height:4px;background:#4a4a4a"></div>

<!-- ===== status bar ===== -->
<div class="hl" style="left:0;top:1349px;width:2656px;height:2px"></div>
<div id="status"></div>
<div id="remote"></div>
<svg style="left:20px;top:1358px" width="24" height="26" viewBox="0 0 24 26" fill="none" stroke="#fff" stroke-width="1.900"><path d="M3.600 8.200L11.700 16L3.600 23.800M20.200 1.400L12.300 8.700L20.200 16.200"/></svg>
<!-- graph icon -->
<svg style="left:82px;top:1358px" width="26" height="28" viewBox="0 0 26 28" fill="none" stroke="#3b3b3b" stroke-width="1.700"><circle cx="6" cy="5" r="3.400"/><circle cx="6" cy="21.100" r="3.400"/><circle cx="20.300" cy="12.100" r="3.400"/><path d="M6 8.400v9.300M6 24.500v1.300M20.300 15.500v1.500a4.600 4.600 0 0 1-4.600 4.600H9.400"/><path d="M13 1v24.700" stroke-width="2"/></svg>
<!-- rocket -->
<svg style="left:142px;top:1358px" width="28" height="28" viewBox="0 0 28 28" fill="none" stroke="#3b3b3b" stroke-width="1.700" stroke-linejoin="miter"><path d="M25.800 1.200Q13 2 5.200 15.400M25.800 1.200Q25 14 12 22.200"/><path d="M25.800 1.200l-1.200.1" stroke-linecap="round"/><path d="M2.200 14.300L12.200 24.600M9.800 8.300H2.500V14.600M18.500 17.500V24.600H12.200M2.200 20.300V24.600H6.800"/><circle cx="16.500" cy="10.500" r="2.400" fill="#3b3b3b" stroke="none"/></svg>
<!-- plug -->
<svg style="left:171px;top:1358px" width="26" height="28" viewBox="0 0 26 28" fill="none" stroke="#3b3b3b" stroke-width="1.700"><path d="M1.200 23.800L4.400 21.100M21.300 3.700L24 1.500"/><path d="M5.500 11.600A5.600 5.600 0 1 0 13.700 18.600Z" stroke-linejoin="round"/><path d="M8 13.700l2.900-3.200M12.100 17.200l2.900-3.200"/><path d="M12 6.400A5.200 5.200 0 1 1 18.600 12.900Z" stroke-linejoin="round"/></svg>
<!-- error / warning / broadcast -->
<svg style="left:362px;top:1357.700px" width="28" height="28" viewBox="0 0 28 28" fill="none" stroke="#3b3b3b" stroke-width="1.800"><circle cx="13.800" cy="13.500" r="11.200"/><path d="M9 8.700l9.600 9.600M18.600 8.700l-9.600 9.600"/></svg>
<svg style="left:418.500px;top:1356.600px" width="28" height="28" viewBox="0 0 28 28" fill="none" stroke="#3b3b3b" stroke-width="1.800" stroke-linejoin="round"><path d="M14 3L2.800 24h22.400z"/><path d="M14 10.500v7.500M14 19.800v2.400" stroke-width="2.200"/></svg>
<svg style="left:501px;top:1358px" width="28" height="28" viewBox="0 0 28 28" fill="none" stroke="#3b3b3b" stroke-width="1.600"><circle cx="14" cy="8.700" r="1.900"/><path d="M13.300 10.500L6.900 24.400M14.700 10.500L21.100 24.400M10.700 16.300h6.600M8.700 20.100h10.600"/><path d="M9.820 3.720A6.500 6.500 0 0 0 9.820 13.680M18.180 3.720A6.500 6.500 0 0 1 18.180 13.680M5.830 1.340A11 11 0 0 0 5.830 16.060M22.170 1.340A11 11 0 0 1 22.170 16.060"/></svg>
<!-- bell -->
<svg style="left:2599px;top:1357px" width="26" height="28" viewBox="0 0 26 28" fill="none" stroke="#3b3b3b" stroke-width="1.800" stroke-linejoin="round"><path d="M3.200 20.800c1.800-2.500 2.300-5 2.300-8.800 0-5.500 3.200-9 7.500-9s7.500 3.500 7.500 9c0 3.800.5 6.300 2.300 8.800z"/><path d="M9.800 21a3.200 3.200 0 0 0 6.400 0"/></svg>

<span class="t" style="left:1276.0px;top:15.5px;font-size:24px;line-height:36px;font-weight:400;color:#1f1f1f;letter-spacing:0.485px;">API flows demo</span>
<span class="t" style="left:133.6px;top:87.6px;font-size:22.5px;line-height:34px;font-weight:400;color:#3b3b3b;letter-spacing:-1.100px;">EXPLORER</span>
<span class="t" style="left:134.2px;top:144.5px;font-size:22.6px;line-height:34px;font-weight:700;color:#3b3b3b;letter-spacing:-0.146px;">API FLOWS DEMO</span>
<span class="t" style="left:162.0px;top:186.5px;font-size:26px;line-height:39px;font-weight:400;color:#3b3b3b;letter-spacing:0.682px;">node_modules</span>
<span class="t" style="left:163.0px;top:230.5px;font-size:26px;line-height:39px;font-weight:400;color:#3b3b3b;letter-spacing:0.300px;">albums.yaml</span>
<span class="t" style="left:163.0px;top:274.5px;font-size:26px;line-height:39px;font-weight:400;color:#3b3b3b;letter-spacing:0.821px;">collection.json</span>
<span class="t" style="left:162.0px;top:318.5px;font-size:26px;line-height:39px;font-weight:400;color:#3b3b3b;letter-spacing:0.894px;">package-lock.json</span>
<span class="t" style="left:162.0px;top:362.5px;font-size:26px;line-height:39px;font-weight:400;color:#3b3b3b;letter-spacing:0.682px;">package.json</span>
<span class="t" style="left:162.0px;top:406.5px;font-size:26px;line-height:39px;font-weight:400;color:#3b3b3b;letter-spacing:0.650px;">photos.yaml</span>
<span class="t" style="left:162.0px;top:450.5px;font-size:26px;line-height:39px;font-weight:400;color:#3b3b3b;letter-spacing:0.556px;">posts.yaml</span>
<span class="t" style="left:163.0px;top:494.5px;font-size:26px;line-height:39px;font-weight:400;color:#3b3b3b;letter-spacing:0.592px;">students.yaml</span>
<span class="t" style="left:163.0px;top:538.5px;font-size:26px;line-height:39px;font-weight:400;color:#3b3b3b;letter-spacing:0.364px;">swagger.yaml</span>
<span class="t" style="left:162.0px;top:582.5px;font-size:26px;line-height:39px;font-weight:400;color:#3b3b3b;letter-spacing:0.367px;">users.yaml</span>
<span class="t" style="left:133.9px;top:1267.4px;font-size:22.4px;line-height:34px;font-weight:700;color:#3b3b3b;letter-spacing:0.267px;">OUTLINE</span>
<span class="t" style="left:134.9px;top:1311.6px;font-size:22.4px;line-height:34px;font-weight:700;color:#3b3b3b;letter-spacing:0.086px;">TIMELINE</span>
<span class="t" style="left:566.5px;top:85.8px;font-size:26px;line-height:39px;font-weight:400;color:#3b3b3b;letter-spacing:0.583px;">students.yaml</span>
<span class="t" style="left:578.5px;top:142.7px;font-size:26px;line-height:39px;font-weight:400;color:#616161;letter-spacing:0.575px;">students.yaml</span>
<span class="t" style="left:777.6px;top:142.1px;font-size:26px;line-height:39px;font-weight:400;color:#616161;letter-spacing:-0.450px;">...</span>
<span class="t" style="left:204.5px;top:1353.9px;font-size:24px;line-height:36px;font-weight:400;color:#3b3b3b;letter-spacing:0.837px;">Launchpad</span>
<span class="t" style="left:397.1px;top:1353.9px;font-size:24px;line-height:36px;font-weight:400;color:#3b3b3b;letter-spacing:0.000px;">0</span>
<span class="t" style="left:453.9px;top:1353.9px;font-size:24px;line-height:36px;font-weight:400;color:#3b3b3b;letter-spacing:0.000px;">0</span>
<span class="t" style="left:535.8px;top:1353.9px;font-size:24px;line-height:36px;font-weight:400;color:#3b3b3b;letter-spacing:0.000px;">0</span>
<span class="t" style="left:1790.2px;top:1353.9px;font-size:24px;line-height:36px;font-weight:400;color:#3b3b3b;letter-spacing:0.673px;">Ln 28, Col 1</span>
<span class="t" style="left:1960.4px;top:1353.9px;font-size:24px;line-height:36px;font-weight:400;color:#3b3b3b;letter-spacing:0.500px;">Spaces: 2</span>
<span class="t" style="left:2103.4px;top:1353.9px;font-size:24px;line-height:36px;font-weight:400;color:#3b3b3b;letter-spacing:1.400px;">UTF-8</span>
<span class="t" style="left:2208.8px;top:1353.9px;font-size:24px;line-height:36px;font-weight:400;color:#3b3b3b;letter-spacing:-0.500px;">LF</span>
<span class="t" style="left:2268.0px;top:1353.9px;font-size:24px;line-height:36px;font-weight:400;color:#3b3b3b;letter-spacing:0.400px;">YAML</span>
<span class="t" style="left:2364.9px;top:1353.9px;font-size:24px;line-height:36px;font-weight:400;color:#3b3b3b;letter-spacing:0.269px;">No JSON Schema</span>
</div></div>
</div>
</body>
</html>
